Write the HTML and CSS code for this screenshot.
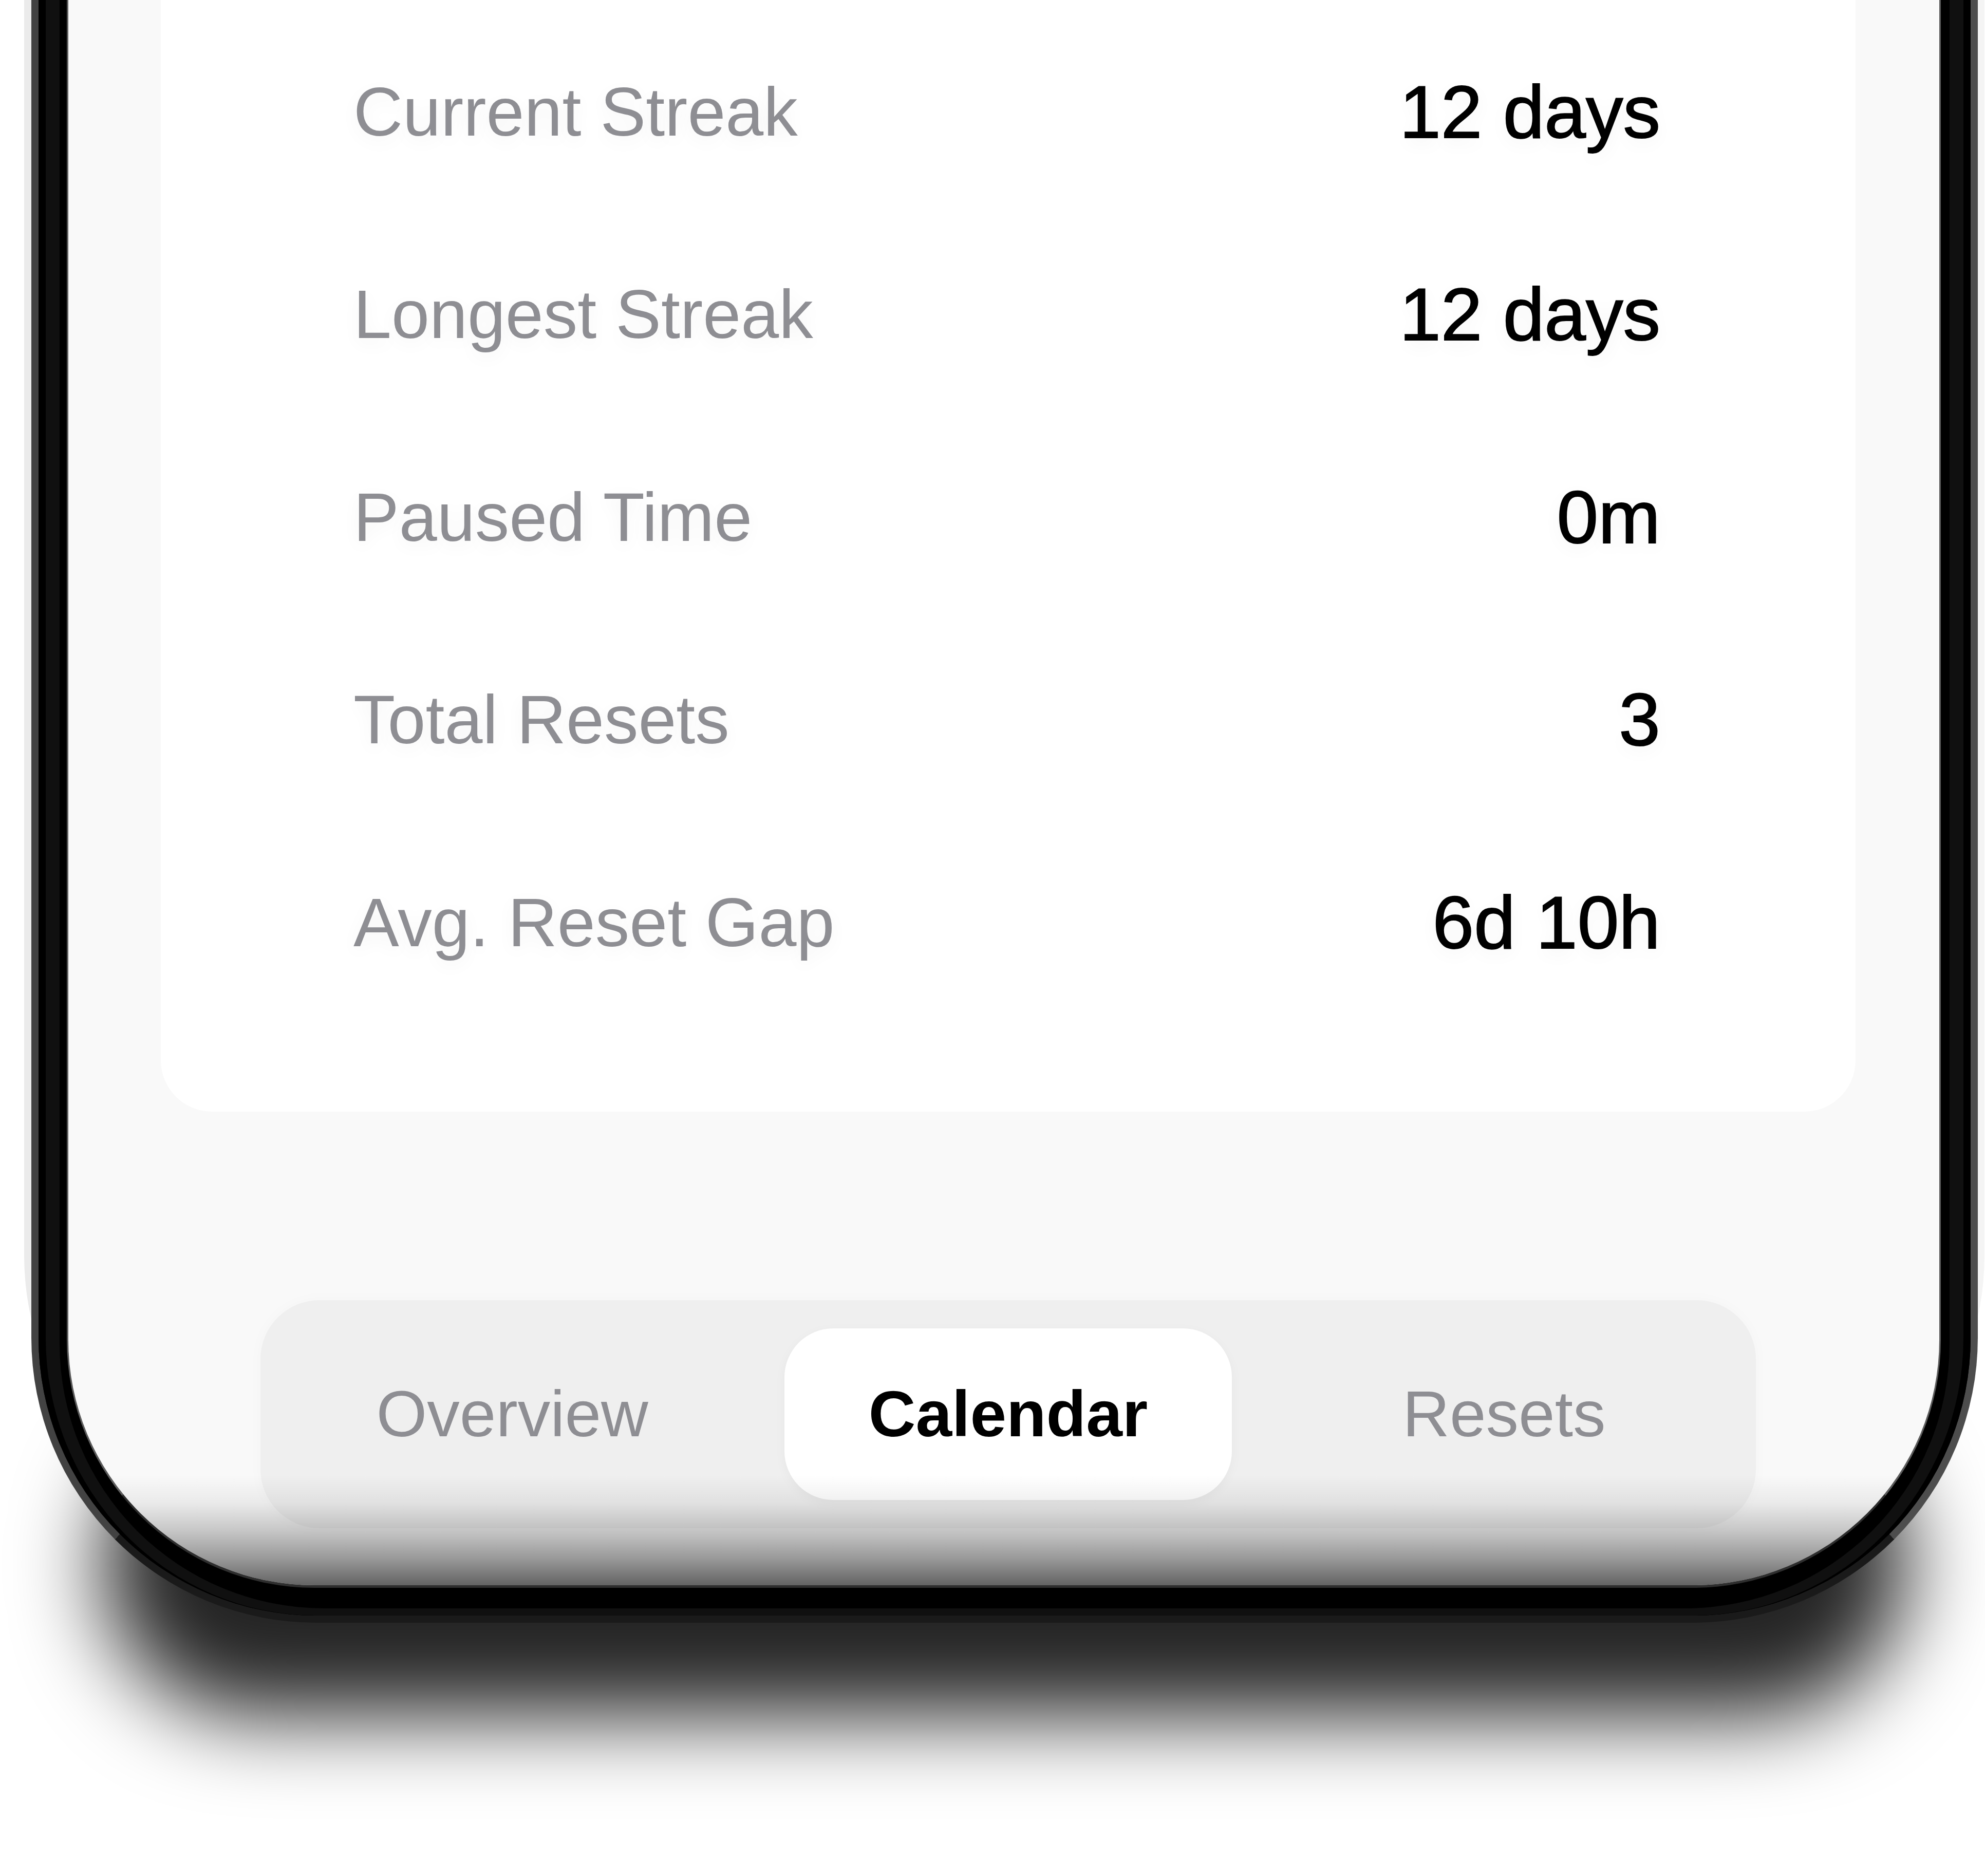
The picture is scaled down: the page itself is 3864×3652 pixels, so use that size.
FILE: index.html
```html
<!DOCTYPE html>
<html lang="en">
<head>
<meta charset="utf-8">
<title>Streak Stats</title>
<link rel="stylesheet" href="styles.css">
</head>
<body>
  <div class="phone">
    <div class="bezel">
      <div class="frame">
        <div class="screen">
          <section class="card">
            <div class="row"><span class="label">Current Streak</span><span class="value">12 days</span></div>
            <div class="row"><span class="label">Longest Streak</span><span class="value">12 days</span></div>
            <div class="row"><span class="label">Paused Time</span><span class="value">0m</span></div>
            <div class="row"><span class="label">Total Resets</span><span class="value">3</span></div>
            <div class="row"><span class="label">Avg. Reset Gap</span><span class="value">6d 10h</span></div>
          </section>
          <nav class="tabs">
            <div class="tab">Overview</div>
            <div class="tab active">Calendar</div>
            <div class="tab">Resets</div>
          </nav>
        </div>
      </div>
    </div>
  </div>
</body>
</html>
```
FILE: styles.css
```css
html {
  margin: 0;
  padding: 0;
  background: #ffffff;
}

body {
  margin: 0;
  padding: 0;
  width: 3864px;
  height: 3652px;
  overflow: hidden;
  font-family: "Liberation Sans", Arial, sans-serif;
}

.phone {
  position: relative;
  margin-left: 61px;
  width: 3789px;
  height: 3159px;
  box-sizing: border-box;
  border-left: 14px solid #424242;
  border-right: 14px solid #4d4d4d;
  border-bottom: 14px solid #1a1a1a;
  border-radius: 0 0 555px 555px;
  background: #000;
  box-shadow:
    -14px -160px 0 0 #ebebeb,
    13px -160px 0 0 #f4f4f4;
}

/* soft drop shadow under the device */
.phone::before {
  content: "";
  position: absolute;
  z-index: -1;
  left: 125px;
  right: 125px;
  top: 2750px;
  bottom: -195px;
  border-radius: 300px;
  background: rgba(0, 0, 0, 0.86);
  filter: blur(85px);
}

.bezel {
  height: 100%;
  box-sizing: border-box;
  border-left: 14px solid #000;
  border-right: 14px solid #000;
  padding: 0 27px 14px 27px;
  background: #101010;
  border-radius: 0 0 541px 541px;
}

.frame {
  height: 100%;
  box-sizing: border-box;
  border-left: 14px solid #000;
  border-right: 17px solid #000;
  border-bottom: 40px solid #000;
  background: #000;
  border-radius: 0 0 515px 515px;
}

.screen {
  position: relative;
  height: 100%;
  box-sizing: border-box;
  border-left: 3px solid #5c5c5c;
  border-right: 3px solid #5c5c5c;
  border-bottom: 5px solid #2e2e2e;
  border-radius: 0 0 483px 483px;
  background: #f9f9f9;
  overflow: hidden;
  display: flex;
  flex-direction: column;
}

.screen::after {
  content: "";
  position: absolute;
  left: 0;
  right: 0;
  bottom: 0;
  height: 215px;
  pointer-events: none;
  background: linear-gradient(to bottom,
    rgba(0, 0, 0, 0) 0%,
    rgba(0, 0, 0, 0.06) 25%,
    rgba(0, 0, 0, 0.2) 50%,
    rgba(0, 0, 0, 0.38) 75%,
    rgba(0, 0, 0, 0.6) 100%);
}

.card {
  margin: 0 163px 0 180px;
  padding: 21px 380px 170px 375px;
  background: #ffffff;
  border-radius: 0 0 100px 100px;
}

.row {
  height: 394.5px;
  display: flex;
  align-items: center;
  justify-content: space-between;
  line-height: 1.15;
}

.label {
  font-size: 133px;
  color: #8e8e93;
  text-shadow: 0 10px 34px rgba(0, 0, 0, 0.05);
}

.value {
  font-size: 145px;
  color: #000;
  -webkit-text-stroke: 2px #000;
  text-shadow: 0 10px 34px rgba(0, 0, 0, 0.05);
}

.tabs {
  margin: 367px 357px 0 374px;
  padding: 55px;
  display: flex;
  gap: 95px;
  background: #efefef;
  border-radius: 115px;
  box-shadow: 0 0 30px rgba(0, 0, 0, 0.025);
}

.tab {
  flex: 1;
  height: 334px;
  display: flex;
  align-items: center;
  justify-content: center;
  border-radius: 95px;
  font-size: 127px;
  line-height: 1.15;
  color: #8e8e93;
}

.tab.active {
  background: #ffffff;
  color: #000;
  font-weight: 700;
  box-shadow: 0 6px 22px rgba(0, 0, 0, 0.04);
}
```
